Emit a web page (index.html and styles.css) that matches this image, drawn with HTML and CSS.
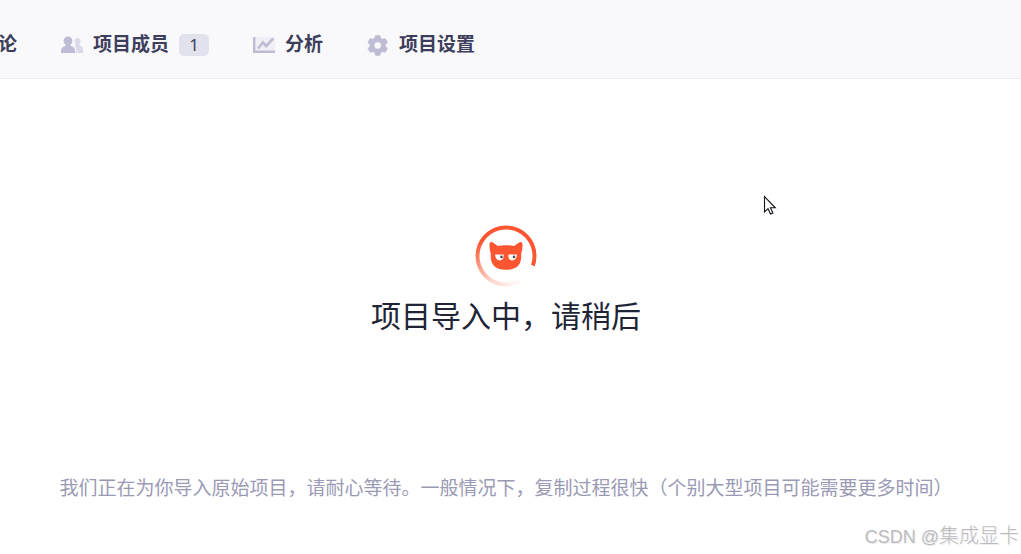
FILE: index.html
```html
<!DOCTYPE html>
<html lang="zh-CN">
<head>
<meta charset="utf-8">
<meta name="viewport" content="width=device-width, initial-scale=1">
<title>项目导入中</title>
<link rel="stylesheet" href="styles.css">
</head>
<body>
<header class="topbar">
  <nav class="tabs">
    <a class="tab" href="#">论</a>
    <a class="tab" href="#">
      <svg class="tab-icon" viewBox="0 0 22 22" fill="#bdbcd4" aria-hidden="true">
        <path d="M16.500 4a3.300 3.300 0 0 1 1.900 6v1.200c2.100.6 3.600 1.700 3.600 3.800v4h-6.600v-2.700c0-1.900-.7-3.400-1.900-4.400l1.200-1.900A3.300 3.300 0 0 1 16.500 4z" opacity=".5"/>
        <path d="M7 2.500a4.400 4.400 0 0 1 4.400 4.400c0 1.600-.7 2.900-1.800 3.700v1.100c2.600.7 4.600 2.200 4.600 4.800V19H0v-2.500c0-2.600 2-4.100 4.600-4.800v-1.100C3.400 9.800 2.600 8.500 2.600 6.900A4.400 4.400 0 0 1 7 2.500z"/>
      </svg>
      <span>项目成员</span>
      <span class="badge">1</span>
    </a>
    <a class="tab" href="#">
      <svg class="tab-icon" viewBox="0 0 22 22" fill="none" aria-hidden="true">
        <path d="M2 3h20v14H2z" fill="#efeff5"/>
        <path d="M1.200 3v14.800H22" stroke="#bdbcd4" stroke-width="2.400"/>
        <path d="M5 14.500l5-6 3.200 3.500 7-7.500" stroke="#bdbcd4" stroke-width="2.600"/>
      </svg>
      <span>分析</span>
    </a>
    <a class="tab" href="#">
      <svg class="tab-icon" viewBox="0 0 22 22" aria-hidden="true">
        <path d="M8.600 1.500h4.200l1 2.800 1.600.9 2.900-.6 2.200 3.700-2 2.200v1.900l2 2.200-2.200 3.700-2.900-.6-1.600.9-1 2.800H8.600l-1-2.800-1.600-.9-2.900.6-2.200-3.700 2-2.200v-1.900l-2-2.200 2.200-3.700 2.900.6 1.600-.9zM10.700 7.800a3.600 3.600 0 1 0 0 7.200 3.600 3.600 0 0 0 0-7.200z" fill="#bdbcd4" fill-rule="evenodd" stroke="#bdbcd4" stroke-width=".6" stroke-linejoin="round"/>
      </svg>
      <span>项目设置</span>
    </a>
  </nav>
</header>
<main class="content">
  <div class="loader" role="status" aria-label="加载中">
    <div class="loader-ring"></div>
    <svg class="loader-cat" viewBox="0 0 62 62" aria-hidden="true">
      <path d="M14.500 20c0-3 1.600-3.900 3.800-2.200l4.500 3.300c4.800-1.200 11.600-1.200 16.400 0l4.500-3.300c2.200-1.700 3.800-.8 3.800 2.200 0 3.500-.4 5.800-1.300 8.500.6 8.700-2 16.200-15.200 16.200S15.200 37.200 15.800 28.500c-.9-2.700-1.300-5-1.300-8.500z" fill="#fc5531"/>
      <path d="M20.200 29.400h8.400c.4 3.300-.9 6-3.700 6-2.900 0-5-2.700-4.700-6zM41.800 29.400h-8.400c-.4 3.300.9 6 3.700 6 2.900 0 5-2.700 4.700-6z" fill="#fff"/>
      <circle cx="26.500" cy="31.900" r="1.300" fill="#465058"/>
      <circle cx="39" cy="31.900" r="1.300" fill="#465058"/>
    </svg>
  </div>
  <h1 class="title">项目导入中，请稍后</h1>
  <p class="note">我们正在为你导入原始项目，请耐心等待。一般情况下，复制过程很快（个别大型项目可能需要更多时间）</p>
</main>
<svg class="pointer" viewBox="0 0 14 21" aria-hidden="true">
  <path d="M1.500 1.500v15.500l3.500-3.300 2.500 5.300 2.400-1.100-2.500-5.100h4.900z" fill="#fff" stroke="#14141e" stroke-width="1.100"/>
</svg>
<div class="watermark"><span class="watermark-site">CSDN @</span>集成显卡</div>
</body>
</html>
```
FILE: styles.css
```css
* {
  box-sizing: border-box;
}

body {
  margin: 0;
  min-height: 100vh;
  position: relative;
  background: #fff;
  font-family: "Noto Sans CJK SC", "Noto Sans", sans-serif;
  overflow-x: hidden;
}

.topbar {
  padding: 30px 0 22px;
  background: #f9f9fc;
  border-bottom: 1px solid #eeeef2;
}

.tabs {
  display: flex;
  gap: 44px;
  margin-left: -2px;
}

.tab {
  display: flex;
  align-items: flex-end;
  gap: 10px;
  color: #3d3e5b;
  font-size: 19px;
  font-weight: 700;
  line-height: 26px;
  text-decoration: none;
  white-space: nowrap;
}

.tab-icon {
  flex: none;
  width: 22px;
  height: 22px;
}

.badge {
  width: 30px;
  border-radius: 5px;
  background: #e2e2ec;
  font-family: "Noto Sans", sans-serif;
  font-size: 17px;
  font-weight: 400;
  line-height: 22px;
  text-align: center;
}

.content {
  display: flex;
  flex-direction: column;
  align-items: center;
  padding: 146px 20px 40px 11px;
}

.loader {
  position: relative;
  width: 62px;
  height: 62px;
}

.loader-ring {
  width: 100%;
  height: 100%;
  border-radius: 50%;
  background: conic-gradient(#fc5531 0 109deg, transparent 110deg 140deg, #fff4f1 165deg, #fed5cc 210deg, #fd8a70 260deg, #fc5531 300deg);
  mask: radial-gradient(circle closest-side, transparent 26px, #000 27px 30px, transparent 31px);
}

.loader-cat {
  position: absolute;
  inset: 0;
}

.title {
  margin: 5px 0 0;
  color: #202435;
  font-size: 30px;
  font-weight: 400;
  line-height: 44px;
}

.note {
  margin: 137px 0 0;
  color: #9a9ab5;
  font-size: 19px;
  line-height: 28px;
}

.pointer {
  position: absolute;
  left: 763px;
  top: 195px;
  width: 14px;
  height: 21px;
}

.watermark {
  position: absolute;
  right: 2px;
  bottom: 3px;
  color: #bcbcbe;
  font-size: 20px;
  font-weight: 300;
  line-height: 28px;
  text-shadow: 1px 1px 0 #ececee;
}

.watermark-site {
  font-family: "Liberation Sans", sans-serif;
  font-size: 18px;
}
```
